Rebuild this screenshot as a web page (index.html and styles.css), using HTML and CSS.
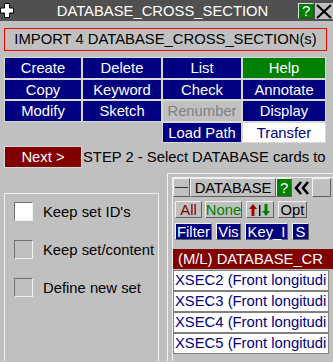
FILE: index.html
```html
<!DOCTYPE html>
<html lang="en">
<head>
  <meta charset="UTF-8">
  <title>DATABASE_CROSS_SECTION</title>
  <link rel="stylesheet" href="styles.css">
</head>
<body>
  <div class="titlebar">
    <span class="tb-icon">
      <svg width="14" height="15" viewBox="0 0 14 15"><polygon points="4.5,0.5 9.5,0.5 9.5,5 13.5,5 13.5,10 9.5,10 9.5,14.5 4.5,14.5 4.5,10 0.5,10 0.5,5 4.5,5" fill="#fff" stroke="#000"/></svg>
    </span>
    <span class="tb-title">DATABASE_CROSS_SECTION</span>
    <span class="tb-help">?</span>
    <span class="tb-close">
      <svg width="18" height="16" viewBox="0 0 18 16"><path d="M2 2 L16 15 M16 2 L2 15" stroke="#000" stroke-width="2.2"/></svg>
    </span>
  </div>

  <div class="import">IMPORT 4 DATABASE_CROSS_SECTION(s)</div>

  <div class="menu">
    <div class="btn">Create</div>
    <div class="btn">Delete</div>
    <div class="btn">List</div>
    <div class="btn green">Help</div>
    <div class="btn">Copy</div>
    <div class="btn">Keyword</div>
    <div class="btn">Check</div>
    <div class="btn">Annotate</div>
    <div class="btn">Modify</div>
    <div class="btn">Sketch</div>
    <div class="btn disabled">Renumber</div>
    <div class="btn">Display</div>
    <div class="btn col3">Load Path</div>
    <div class="btn white">Transfer</div>
  </div>

  <div class="step">
    <div class="btn red next">Next &gt;</div>
    <span class="step-text">STEP 2 - Select DATABASE cards to</span>
  </div>

  <div class="lower">
    <div class="left">
      <div class="options">
        <div class="opt"><span class="cbox on"></span>Keep set ID's</div>
        <div class="opt"><span class="cbox"></span>Keep set/content</div>
        <div class="opt"><span class="cbox"></span>Define new set</div>
      </div>
    </div>

    <div class="sub">
      <div class="sub-inner">
        <div class="sub-head">
          <span class="hb hb-min"><span class="dash"></span></span>
          <span class="hb hb-title">DATABASE</span>
          <span class="hb hb-help">?</span>
          <span class="hb-back">
            <svg width="16" height="14" viewBox="0 0 16 14"><path d="M7 1 L2 7 L7 13 M14 1 L9 7 L14 13" fill="none" stroke="#000" stroke-width="2.6"/></svg>
          </span>
          <span class="hb hb-blank"></span>
        </div>

        <div class="tools">
          <span class="tb w-all c-red">All</span>
          <span class="tb w-none c-green">None</span>
          <span class="tb w-sort">
            <svg width="22" height="14" viewBox="0 0 22 14"><path d="M4 1 L8 6 L5.5 6 L5.5 13 L2.5 13 L2.5 6 L0 6 Z" fill="#a00000"/><rect x="10" y="2" width="1.4" height="11" fill="#000"/><path d="M15.5 1 L18.5 1 L18.5 8 L21 8 L17 13 L13 8 L15.5 8 Z" fill="#008000"/></svg>
          </span>
          <span class="tb w-opt">Opt</span>
        </div>

        <div class="tools">
          <span class="tb blue w-filter">Filter</span>
          <span class="tb blue w-vis">Vis</span>
          <span class="tb blue w-key">Key_I</span>
          <span class="tb blue w-s">S</span>
        </div>

        <div class="list">
          <div class="row head">(M/L) DATABASE_CR</div>
          <div class="row">XSEC2 (Front longitudi</div>
          <div class="row">XSEC3 (Front longitudi</div>
          <div class="row">XSEC4 (Front longitudi</div>
          <div class="row">XSEC5 (Front longitudi</div>
        </div>
      </div>
    </div>
  </div>
</body>
</html>
```

FILE: styles.css
```css
* {
  box-sizing: border-box;
}
html, body {
  margin: 0;
}
body {
  width: 333px;
  height: 362px;
  overflow: hidden;
  background: #c0c0c0;
  font-family: 'Liberation Sans', Arial, sans-serif;
  font-size: 14.8px;
  color: #000;
}
.titlebar {
  display: flex;
  align-items: center;
  height: 21px;
  background: #505050;
}
.tb-icon {
  width: 14px;
  display: flex;
  align-items: center;
}
.tb-title {
  flex: 1;
  text-align: center;
  color: #fff;
  padding-left: 13px;
  white-space: nowrap;
}
.tb-help {
  width: 16px;
  height: 16px;
  margin-top: 1px;
  background: #008000;
  color: #fff;
  border: 1px solid;
  border-color: #e0e0e0 #404040 #404040 #e0e0e0;
  text-align: center;
  line-height: 14px;
}
.tb-close {
  width: 18px;
  height: 16px;
  margin-left: 1px;
  margin-top: 1px;
  background: #c0c0c0;
  display: flex;
}
.import {
  margin: 7px 6px 0 4px;
  height: 23px;
  border: 1px solid #ff0000;
  text-align: center;
  line-height: 21px;
  white-space: nowrap;
}
.menu {
  display: grid;
  grid-template-columns: 78px 80px 80px 84px;
  grid-template-rows: 22px 21px 22px 21px;
  margin: 6px 0 0 4px;
}
.btn {
  display: flex;
  align-items: center;
  justify-content: center;
  border: 1px solid #d8d8d8;
  background: #000080;
  color: #fff;
  white-space: nowrap;
}
.btn.green {
  background: #008000;
}
.btn.disabled {
  background: #c0c0c0;
  color: #808080;
}
.btn.white {
  background: #fff;
  color: #000080;
}
.btn.red {
  background: #800000;
}
.btn.col3 {
  grid-column: 3;
}
.step {
  display: flex;
  align-items: center;
  height: 22px;
  margin-top: 3px;
  padding-left: 4px;
}
.next {
  width: 78px;
  height: 22px;
}
.step-text {
  padding-left: 1px;
  white-space: nowrap;
}
.lower {
  display: flex;
  margin-top: 3px;
}
.left {
  flex: none;
  width: 167px;
  padding-left: 4px;
}
.options {
  margin-top: 22px;
  width: 155px;
  height: 168px;
  border: 1px solid #f0f0f0;
  border-bottom: none;
  padding: 8px 0 0 9px;
}
.opt {
  display: flex;
  align-items: center;
  gap: 10px;
  height: 19px;
  margin-bottom: 19px;
  white-space: nowrap;
}
.cbox {
  flex: none;
  width: 19px;
  height: 19px;
  border: 1px solid;
  border-color: #707070 #f0f0f0 #f0f0f0 #707070;
  background: #c0c0c0;
}
.cbox.on {
  background: #fff;
}
.sub {
  flex: none;
  width: 167px;
  margin-top: 2px;
  border-left: 1px solid #f0f0f0;
  border-top: 1px solid #f0f0f0;
  padding: 3px 0 0 4px;
}
.sub-inner {
  border-left: 1px solid #f0f0f0;
  border-top: 1px solid #f0f0f0;
  height: 184px;
  overflow: hidden;
}
.sub-head {
  display: flex;
  height: 19px;
}
.hb {
  display: flex;
  align-items: center;
  justify-content: center;
  border: 1px solid;
  border-color: #f0f0f0 #606060 #606060 #f0f0f0;
}
.hb-min {
  width: 17px;
}
.dash {
  width: 13px;
  height: 1px;
  background: #303030;
}
.hb-title {
  width: 86px;
}
.hb-help {
  width: 16px;
  background: #008000;
  color: #fff;
}
.hb-back {
  width: 19px;
  display: flex;
  align-items: center;
  justify-content: center;
}
.hb-blank {
  width: 19px;
  margin-left: 1px;
}
.tools {
  display: flex;
  gap: 4px;
  height: 17px;
  margin-top: 4px;
  padding-left: 2px;
}
.tools + .tools {
  margin-top: 5px;
}
.tb {
  display: flex;
  align-items: center;
  justify-content: center;
  border: 1px solid;
  border-color: #f0f0f0 #606060 #606060 #f0f0f0;
}
.tb.blue {
  background: #000080;
  color: #fff;
}
.c-red {
  color: #800000;
}
.c-green {
  color: #008000;
}
.w-all { width: 27px; }
.w-none { width: 37px; margin-left: -1px; }
.w-sort { width: 28px; }
.w-opt { width: 29px; }
.w-filter { width: 37px; }
.w-vis { width: 25px; }
.w-key { width: 43px; }
.w-s { width: 17px; }
.list {
  margin-top: 9px;
}
.row {
  height: 21px;
  width: 156px;
  border: 1px solid #808080;
  background: #fff;
  color: #000080;
  padding-left: 1px;
  line-height: 19px;
  white-space: nowrap;
}
.row.head {
  width: 160px;
  height: 20px;
  border: none;
  background: #800000;
  color: #fff;
  padding-left: 5px;
  line-height: 20px;
  margin-bottom: 1px;
}
```
